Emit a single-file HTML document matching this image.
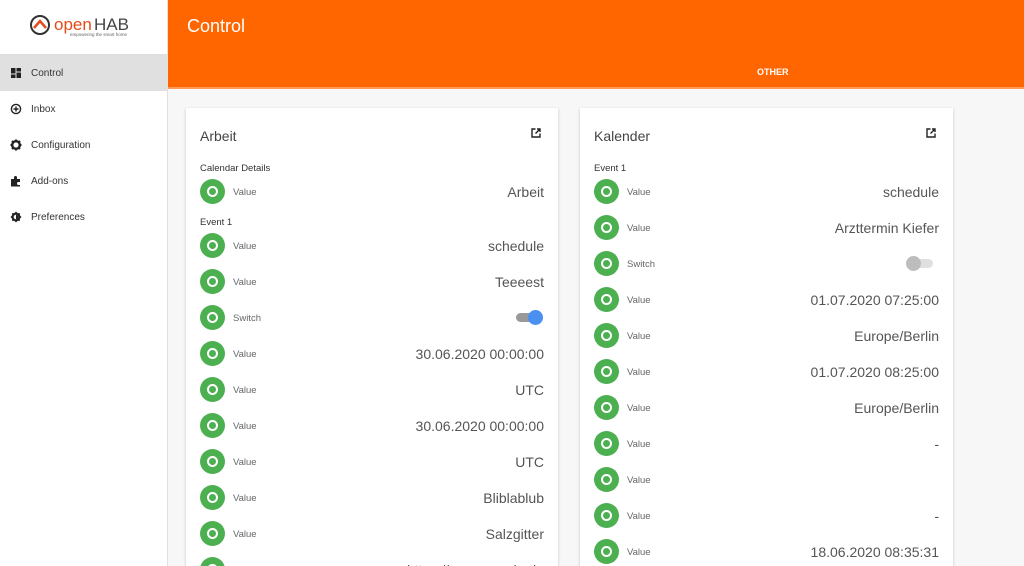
<!DOCTYPE html><html><head><meta charset="utf-8"><style>
*{box-sizing:border-box;margin:0;padding:0}
html,body{width:1024px;height:566px;overflow:hidden}
body{background:#f7f7f7;font-family:"Liberation Sans",sans-serif;position:relative}
.side{position:absolute;left:0;top:0;width:168px;height:566px;background:#fff;border-right:1px solid #e0e0e0}
.logo{height:55px;border-bottom:1px solid #ddd;position:relative}
.nav{height:36px;display:flex;align-items:center;font-size:10px;color:#333;padding-left:31px;position:relative}
.nav.act{background:#e0e0e0}
.nav svg{position:absolute;left:10px;top:12px}
.hdr{position:absolute;left:168px;top:0;right:0;height:89px;background:#ff6600;border-bottom:2px solid #ff9a5a}
.hdr h1{position:absolute;left:19px;top:16px;font-weight:normal;font-size:18px;color:#fff}
.hdr span{position:absolute;left:589px;top:67px;color:#fff;font-size:9px;font-weight:bold}
.card{position:absolute;top:108px;width:372px;height:458px;background:#fff;box-shadow:0 1px 3px rgba(0,0,0,.2);overflow:hidden}
.ttl{position:absolute;left:14px;top:20px;font-size:14px;color:#444}
.ext{position:absolute;right:17px;top:20px}
.sec{position:absolute;left:14px;font-size:9.5px;color:#333}
.row{position:absolute;left:0;right:0;height:26px}
.c{position:absolute;left:14px;top:0;width:25px;height:25px;border-radius:50%;background:#4caf50}
.c:after{content:"";position:absolute;left:7px;top:7px;width:11px;height:11px;border:2px solid #fff;border-radius:50%;box-sizing:border-box}
.l{position:absolute;left:47px;top:8px;font-size:9.5px;color:#666}
.v{position:absolute;right:14px;top:5px;font-size:14px;color:#555}
.sw{position:absolute;right:20px;top:8px;width:22px;height:9px;border-radius:5px}
.sw b{position:absolute;top:-3px;width:15px;height:15px;border-radius:50%}
</style></head><body>
<div class="side">
<div class="logo"><svg width="170" height="54"><circle cx="40" cy="25" r="9" fill="none" stroke="#333" stroke-width="2"/><path d="M34 28 L40 21 L46 28" fill="none" stroke="#e64a19" stroke-width="2.5"/><text x="54" y="30" font-family="Liberation Sans" font-size="17" fill="#e64a19">open</text><text x="94" y="30" font-family="Liberation Sans" font-size="17" fill="#444">HAB</text><text x="70" y="36" font-family="Liberation Sans" font-size="4.5" fill="#666">empowering the smart home</text></svg></div>
<div class="nav act"><svg width="12" height="12"><rect x="1" y="1" width="4.5" height="5.5" fill="#222"/><rect x="6.5" y="1" width="4.5" height="3.5" fill="#222"/><rect x="1" y="7.5" width="4.5" height="3.5" fill="#222"/><rect x="6.5" y="5.5" width="4.5" height="5.5" fill="#222"/></svg>Control</div>
<div class="nav"><svg width="12" height="12"><circle cx="6" cy="6" r="4.6" fill="none" stroke="#222" stroke-width="1.4"/><path d="M6 3.5v5M3.5 6h5" stroke="#222" stroke-width="1.4"/></svg>Inbox</div>
<div class="nav"><svg width="12" height="12"><circle cx="6" cy="6" r="3.8" fill="none" stroke="#222" stroke-width="2.4"/><path d="M6 0.5v2.5M6 9v2.5M0.5 6h2.5M9 6h2.5M2 2l1.8 1.8M8.2 8.2L10 10M2 10l1.8-1.8M8.2 3.8L10 2" stroke="#222" stroke-width="2"/></svg>Configuration</div>
<div class="nav"><svg width="12" height="12"><path d="M1 4h3V2.5a1.5 1.5 0 013 0V4h3v3H8.5a1.5 1.5 0 000 3H10v1.5H1z" fill="#222"/></svg>Add-ons</div>
<div class="nav"><svg width="12" height="12"><path d="M6 0.5l1.6 1.6h2.3v2.3L11.5 6 9.9 7.6v2.3H7.6L6 11.5 4.4 9.9H2.1V7.6L0.5 6l1.6-1.6V2.1h2.3z" fill="#222"/><circle cx="6" cy="6" r="2.3" fill="#fff"/><path d="M6 3.7a2.3 2.3 0 010 4.6z" fill="#222"/></svg>Preferences</div>
</div>
<div class="hdr"><h1>Control</h1><span>OTHER</span></div>

<div class="card" style="left:186px">
<div class="ttl">Arbeit</div><svg class="ext" width="10" height="10"><path d="M4.5 1H1v8h8V5.5" fill="none" stroke="#222" stroke-width="1.4"/><path d="M6 1h3v3M9 1L4.5 5.5" fill="none" stroke="#222" stroke-width="1.4"/></svg>
<div class="sec" style="top:55px">Calendar Details</div>
<div class="row" style="top:71px"><div class="c"></div><div class="l">Value</div><div class="v">Arbeit</div></div>
<div class="sec" style="top:109px">Event 1</div>
<div class="row" style="top:125px"><div class="c"></div><div class="l">Value</div><div class="v">schedule</div></div>
<div class="row" style="top:161px"><div class="c"></div><div class="l">Value</div><div class="v">Teeeest</div></div>
<div class="row" style="top:197px"><div class="c"></div><div class="l">Switch</div><div class="sw" style="background:#999"><b style="right:-5px;background:#4a90f0"></b></div></div>
<div class="row" style="top:233px"><div class="c"></div><div class="l">Value</div><div class="v">30.06.2020 00:00:00</div></div>
<div class="row" style="top:269px"><div class="c"></div><div class="l">Value</div><div class="v">UTC</div></div>
<div class="row" style="top:305px"><div class="c"></div><div class="l">Value</div><div class="v">30.06.2020 00:00:00</div></div>
<div class="row" style="top:341px"><div class="c"></div><div class="l">Value</div><div class="v">UTC</div></div>
<div class="row" style="top:377px"><div class="c"></div><div class="l">Value</div><div class="v">Bliblablub</div></div>
<div class="row" style="top:413px"><div class="c"></div><div class="l">Value</div><div class="v">Salzgitter</div></div>
<div class="row" style="top:449px"><div class="c"></div><div class="l">Value</div><div class="v">https://www.google.de</div></div>
</div>

<div class="card" style="left:580px;width:373px">
<div class="ttl">Kalender</div><svg class="ext" width="10" height="10"><path d="M4.5 1H1v8h8V5.5" fill="none" stroke="#222" stroke-width="1.4"/><path d="M6 1h3v3M9 1L4.5 5.5" fill="none" stroke="#222" stroke-width="1.4"/></svg>
<div class="sec" style="top:55px">Event 1</div>
<div class="row" style="top:71px"><div class="c"></div><div class="l">Value</div><div class="v">schedule</div></div>
<div class="row" style="top:107px"><div class="c"></div><div class="l">Value</div><div class="v">Arzttermin Kiefer</div></div>
<div class="row" style="top:143px"><div class="c"></div><div class="l">Switch</div><div class="sw" style="background:#e0e0e0"><b style="left:-5px;background:#bdbdbd"></b></div></div>
<div class="row" style="top:179px"><div class="c"></div><div class="l">Value</div><div class="v">01.07.2020 07:25:00</div></div>
<div class="row" style="top:215px"><div class="c"></div><div class="l">Value</div><div class="v">Europe/Berlin</div></div>
<div class="row" style="top:251px"><div class="c"></div><div class="l">Value</div><div class="v">01.07.2020 08:25:00</div></div>
<div class="row" style="top:287px"><div class="c"></div><div class="l">Value</div><div class="v">Europe/Berlin</div></div>
<div class="row" style="top:323px"><div class="c"></div><div class="l">Value</div><div class="v">-</div></div>
<div class="row" style="top:359px"><div class="c"></div><div class="l">Value</div><div class="v"></div></div>
<div class="row" style="top:395px"><div class="c"></div><div class="l">Value</div><div class="v">-</div></div>
<div class="row" style="top:431px"><div class="c"></div><div class="l">Value</div><div class="v">18.06.2020 08:35:31</div></div>
</div>
</body></html>
